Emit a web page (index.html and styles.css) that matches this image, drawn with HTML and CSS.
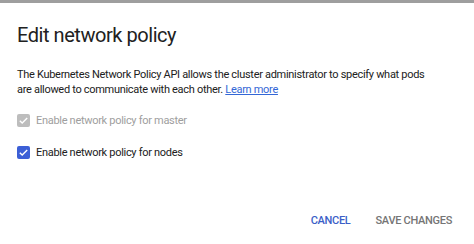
FILE: index.html
```html
<!DOCTYPE html>
<html>
<head>
<meta charset="utf-8">
<link rel="stylesheet" href="styles.css">
</head>
<body>
<div class="dialog">
  <h1 class="title">Edit network policy</h1>
  <p class="desc">The Kubernetes Network Policy API allows the cluster administrator to specify what pods are allowed to communicate with each other. <a class="link" href="#">Learn more</a></p>
  <div class="options">
    <label class="option disabled">
      <span class="box box-gray">
        <svg viewBox="0 0 13 13" width="13" height="13"><path d="M2.8 6.7 L5.2 9 L10.2 4" fill="none" stroke="#fff" stroke-width="1.4"/></svg>
      </span>
      <span class="label">Enable network policy for master</span>
    </label>
    <label class="option">
      <span class="box box-blue">
        <svg viewBox="0 0 13 13" width="13" height="13"><path d="M2.8 6.7 L5.2 9 L10.2 4" fill="none" stroke="#fff" stroke-width="1.4"/></svg>
      </span>
      <span class="label">Enable network policy for nodes</span>
    </label>
  </div>
  <div class="actions">
    <button class="btn btn-primary">CANCEL</button>
    <button class="btn btn-disabled">SAVE CHANGES</button>
  </div>
</div>
</body>
</html>
```
FILE: styles.css
```css
html, body {
  margin: 0;
  padding: 0;
  background: #fff;
}
body {
  font-family: Roboto, "Noto Sans", Arial, sans-serif;
  color: #212121;
}
.dialog {
  border-top: 3px solid #9e9e9e;
  padding: 18px 17px 0 17px;
}
.title {
  margin: 0;
  font-size: 20px;
  font-weight: 400;
  line-height: 28px;
  letter-spacing: -0.45px;
  color: #212121;
}
.desc {
  margin: 18px 0 0 0;
  max-width: 412px;
  font-size: 11px;
  line-height: 15px;
  letter-spacing: -0.3px;
  color: #212121;
}
.link {
  color: #3367d6;
  text-decoration: underline;
  text-decoration-thickness: 1px;
}
.options {
  margin-top: 17px;
  display: flex;
  flex-direction: column;
  gap: 19px;
}
.option {
  display: flex;
  align-items: center;
  gap: 6px;
  font-size: 11px;
  line-height: 13px;
  letter-spacing: -0.3px;
  color: #212121;
}
.option.disabled .label {
  color: #9e9e9e;
}
.box {
  width: 13px;
  height: 13px;
  border-radius: 2px;
  display: flex;
  align-items: center;
  justify-content: center;
}
.box-gray { background: #bdbdbd; }
.box-blue { background: #3c5fd6; }
.actions {
  margin-top: 51px;
  display: flex;
  justify-content: flex-end;
  gap: 15px;
}
.btn {
  background: none;
  border: none;
  font-family: Roboto, Arial, sans-serif;
  font-size: 11px;
  font-weight: 500;
  padding: 4px 5px;
  letter-spacing: -0.3px;
}
.btn-primary { color: #3c5fc8; }
.btn-disabled { color: #757575; }
```
